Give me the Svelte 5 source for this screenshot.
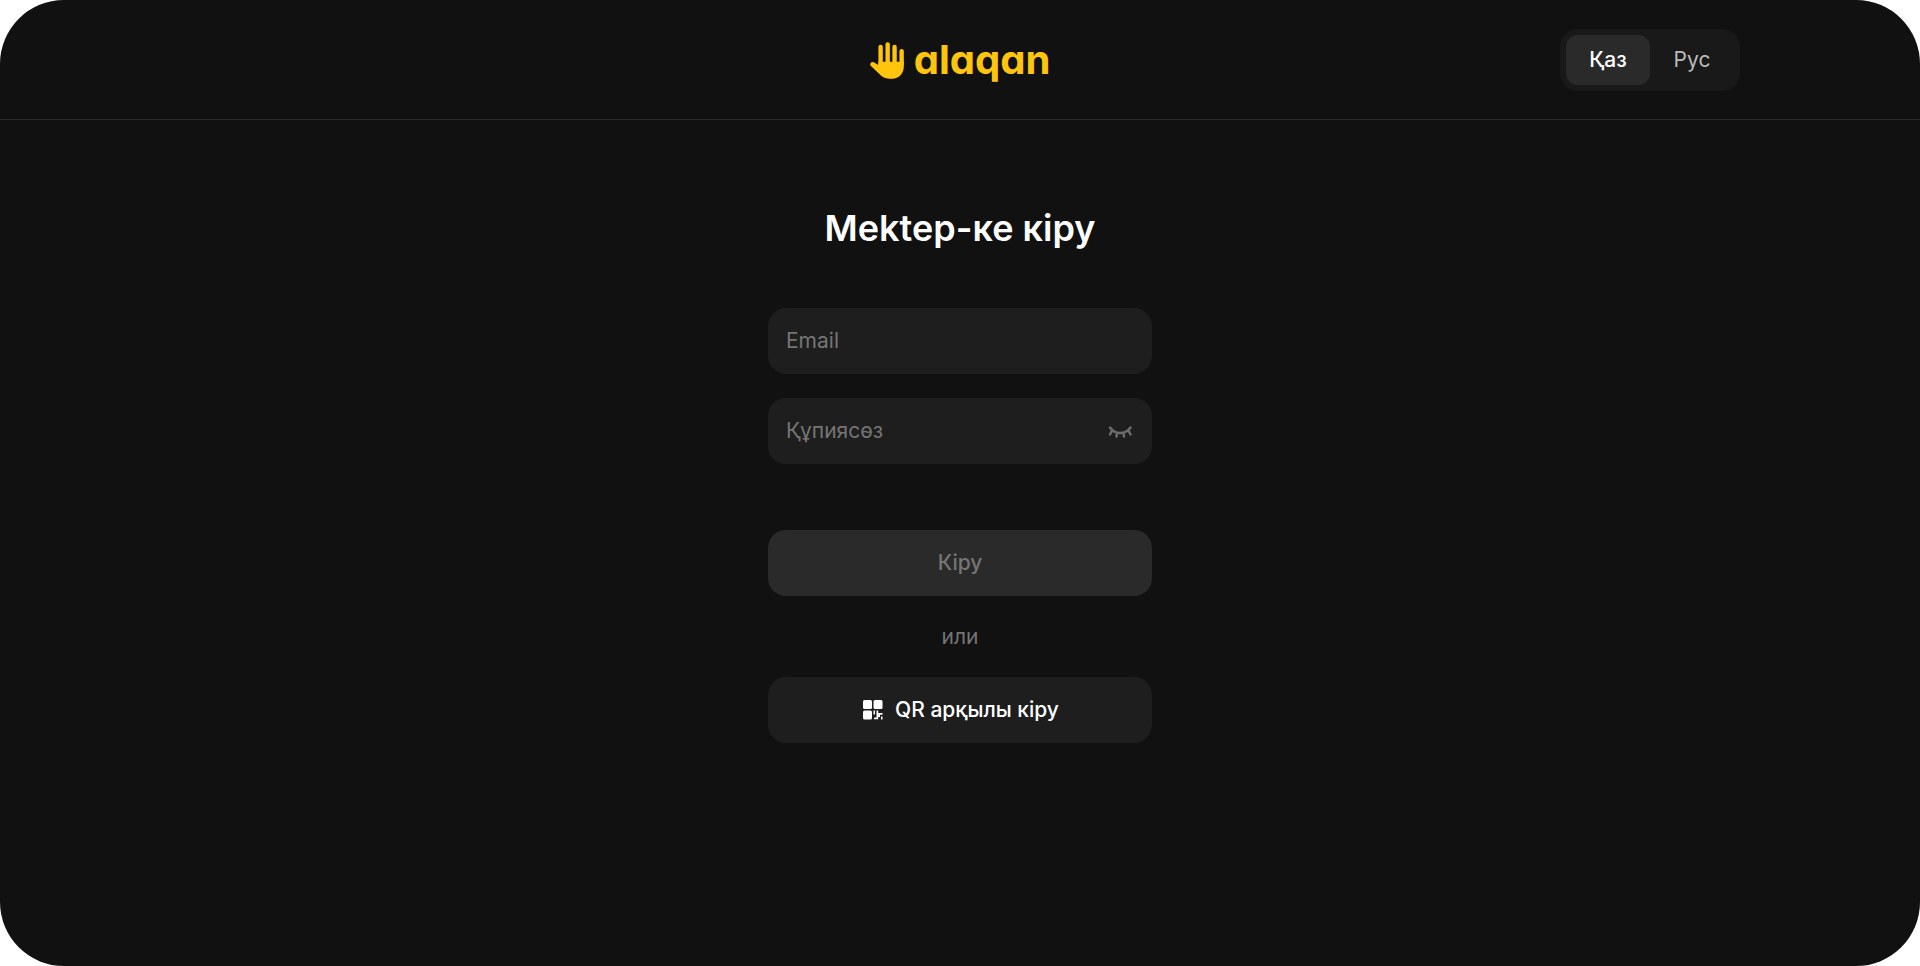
<script>
  let lang = $state('kk');
  let email = $state('');
  let password = $state('');
  let visible = $state(false);
  const languages = [
    { code: 'kk', label: 'Қаз' },
    { code: 'ru', label: 'Рус' }
  ];
</script>

<div class="page">
  <header>
    <div class="bar">
      <a class="logo" href="/">
        <svg class="hand" viewBox="0 0 100 110" aria-hidden="true">
          <g fill="none" stroke="currentColor" stroke-width="13" stroke-linecap="round">
            <path d="M31 65V15M52 65V7M72.500 65V15M93.500 65V27" />
          </g>
          <path fill="currentColor" d="M24.500 59H100V72C100 94 85 109 66 109H57C43 109 34 103 25 93L3 72A7 7 0 0 1 10 60Q14 60 18 65Q24.500 70 24.500 64Z" />
        </svg>
        <span class="wordmark">alaqan</span>
      </a>
      <div class="switch">
        {#each languages as item}
          <button type="button" class:active={lang === item.code} aria-pressed={lang === item.code} onclick={() => (lang = item.code)}>{item.label}</button>
        {/each}
      </div>
    </div>
  </header>

  <main>
    <h1>Mektep-ке кіру</h1>
    <form onsubmit={(e) => e.preventDefault()}>
      <div class="field">
        <input type="email" aria-label="Email" placeholder="Email" bind:value={email} />
      </div>
      <div class="field">
        <input type={visible ? 'text' : 'password'} aria-label="Құпиясөз" placeholder="Құпиясөз" bind:value={password} />
        <button type="button" class="eye" aria-label="Құпиясөз" aria-pressed={visible} onclick={() => (visible = !visible)}>
          <svg viewBox="0 0 24 24" fill="none" stroke="currentColor" stroke-width="2.500" stroke-linecap="round" stroke-linejoin="round" aria-hidden="true">
            <path d="M2 8.500C4.500 12 8 14 12 14S20 12 22.500 8.500M4 11.500L2 15.500M9 13.700L8.500 17.500M15.500 13.700L16 17.500M20.500 11.500L22.500 15.500" />
          </svg>
        </button>
      </div>
      <button type="submit" class="submit" disabled={!email || !password}>Кіру</button>
      <p>или</p>
      <button type="button" class="qr">
        <svg viewBox="0 0 24 24" fill="currentColor" aria-hidden="true">
          <rect x="2" y="2" width="9" height="9" rx="1.500" />
          <rect x="12.500" y="2" width="9" height="9" rx="1.500" />
          <rect x="2" y="12.500" width="9" height="9" rx="1.500" />
          <path d="M12.500 12.500h1.500v4h-1.500zM15.500 12.500h1.700v8.700H13v-1.700h2.500zM17 15h4.500v1.700H19V19h-2zM20 18.500h1.500v3H20z" />
        </svg>
        QR арқылы кіру
      </button>
    </form>
  </main>
</div>

<style>
  :global(body) {
    margin: 0;
    background: #fff;
  }
  .page {
    box-sizing: border-box;
    min-height: 100vh;
    border-radius: 64px;
    overflow: hidden;
    background: #111;
    color: #fff;
    font-family: Inter, sans-serif;
    font-size: 21px;
    line-height: 26px;
  }
  header {
    border-bottom: 1px solid #2a2a2a;
  }
  .bar {
    display: grid;
    grid-template-columns: 1fr auto 1fr;
    align-items: center;
    max-width: 1560px;
    margin: 0 auto;
    padding: 29px 24px 28px;
  }
  @media (min-width: 1608px) {
    .bar {
      padding-left: 0;
      padding-right: 0;
    }
  }
  .logo {
    grid-column: 2;
    display: flex;
    align-items: center;
    gap: 10px;
    color: #ffc40c;
    text-decoration: none;
  }
  .hand {
    width: 34px;
    height: 37px;
  }
  .wordmark {
    font-size: 40px;
    line-height: 48px;
    font-weight: 700;
    font-feature-settings: 'cv11';
  }
  button,
  input {
    font: inherit;
    border: 0;
    margin: 0;
    color: inherit;
  }
  button:not(:disabled) {
    cursor: pointer;
  }
  .switch {
    justify-self: end;
    display: flex;
    padding: 6px;
    border-radius: 18px;
    background: #191919;
  }
  .switch button {
    min-width: 84px;
    height: 50px;
    padding: 0 20px;
    border-radius: 12px;
    background: transparent;
    color: #bbb;
  }
  .switch .active {
    background: #2a2a2a;
    color: #fff;
    font-weight: 500;
  }
  main {
    padding: 84px 24px;
  }
  h1 {
    margin: 0 0 56px;
    font-size: 36px;
    line-height: 48px;
    font-weight: 600;
    text-align: center;
  }
  form {
    display: flex;
    flex-direction: column;
    max-width: 384px;
    margin: 0 auto;
  }
  .field {
    display: flex;
    align-items: center;
    height: 66px;
    margin-bottom: 24px;
    padding: 0 20px 0 18px;
    border-radius: 18px;
    background: #1e1e1e;
  }
  input {
    flex: 1;
    min-width: 0;
    padding: 0;
    background: transparent;
    outline: 0;
  }
  input::placeholder {
    color: #757575;
    opacity: 1;
  }
  .eye {
    display: flex;
    padding: 0;
    background: transparent;
    color: #6c6c6c;
  }
  .eye svg,
  .qr svg {
    width: 24px;
    height: 24px;
  }
  .submit,
  .qr {
    display: flex;
    align-items: center;
    justify-content: center;
    gap: 10px;
    height: 66px;
    padding: 0 18px;
    border-radius: 18px;
    font-weight: 500;
  }
  .submit {
    margin-top: 42px;
    background: #2a2a2a;
  }
  .submit:disabled {
    color: #757575;
  }
  .qr {
    background: #1e1e1e;
  }
  p {
    margin: 28px 0 27px;
    text-align: center;
    color: #757575;
  }
</style>
